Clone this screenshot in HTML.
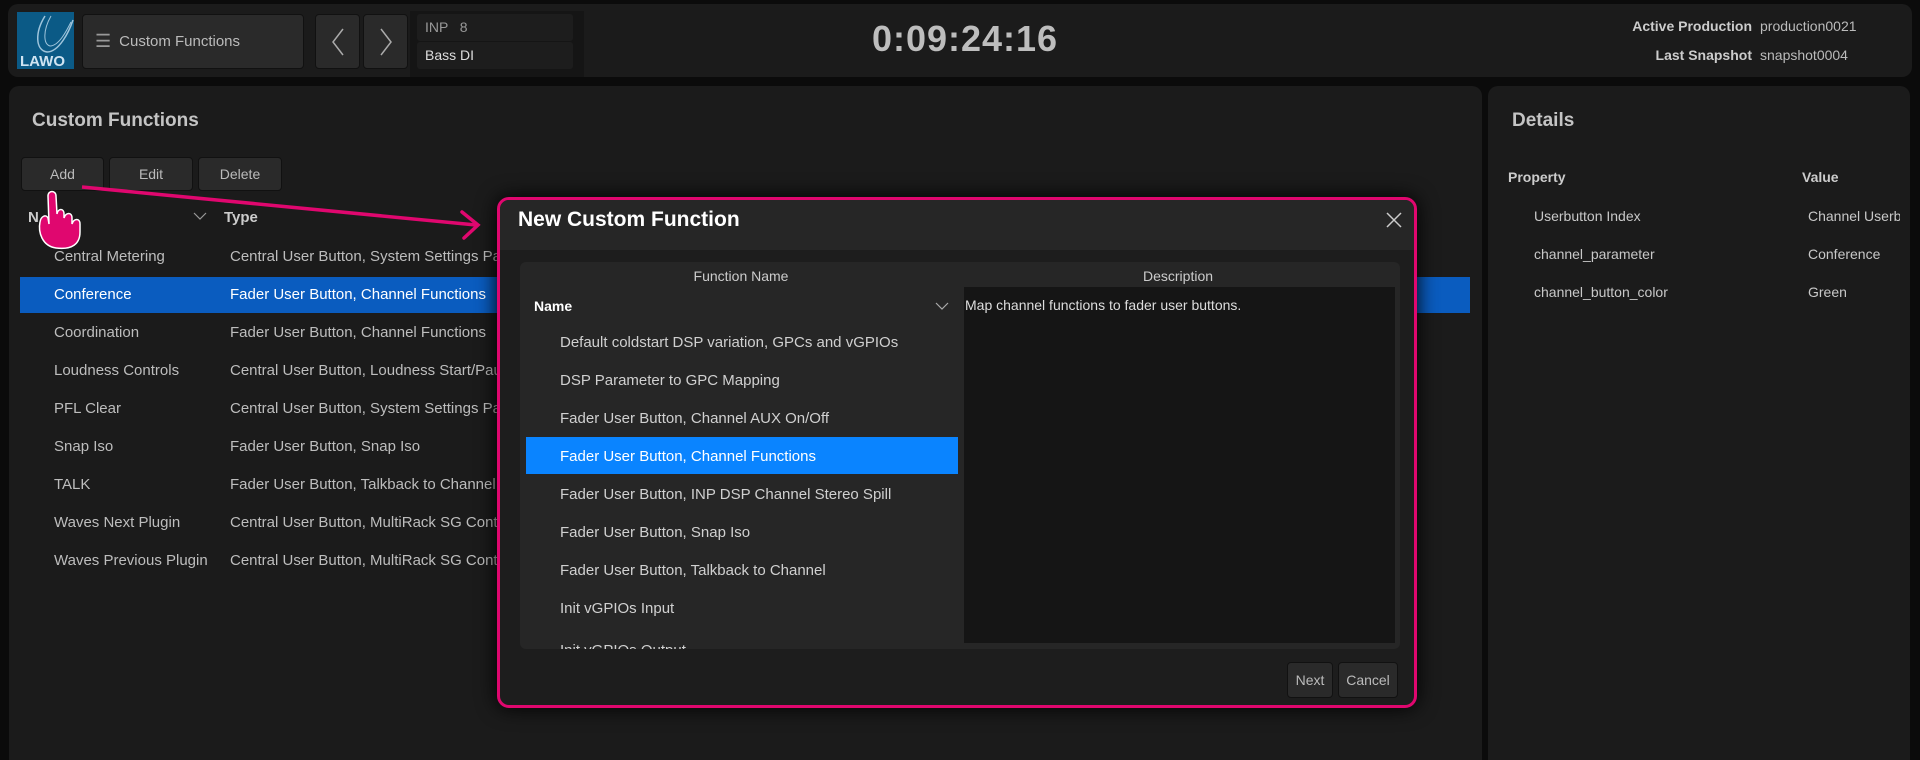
<!DOCTYPE html>
<html><head><meta charset="utf-8"><style>
*{box-sizing:border-box;margin:0;padding:0}
html,body{width:1920px;height:760px;overflow:hidden}
body{background:#0b0b0b;font-family:"Liberation Sans",sans-serif;color:#c8c8c8;position:relative;font-size:15px}
.a{position:absolute}
.panel{background:#1b1b1b;border-radius:10px}
.btn{background:#2a2a2a;border:1px solid #111;border-radius:4px;color:#bbb;display:flex;align-items:center;justify-content:center}
.row{position:absolute;left:54px;font-size:15px;color:#bdbdbd}
.t{position:absolute;left:230px;font-size:15px;color:#bdbdbd;white-space:nowrap}
.li{position:absolute;left:560px;font-size:15px;color:#d0d0d0;white-space:nowrap}
</style></head><body>
<div class="a panel" style="left:8px;top:4px;width:1904px;height:73px"></div>
<div class="a" style="left:17px;top:12px;width:57px;height:57px;background:#0b5a86"></div>
<svg class="a" style="left:17px;top:12px" width="57" height="57"><path d="M28 4 C18 20 18 38 30 40 C42 40 52 20 56 8" fill="none" stroke="#9fc5dc" stroke-width="1.5"/><path d="M34 4 C26 18 26 32 33 34 C42 34 50 18 54 10" fill="none" stroke="#9fc5dc" stroke-width="1"/><text x="3" y="54" fill="#cfe4f2" font-size="15" font-weight="bold" font-family="Liberation Sans">LAWO</text></svg>
<div class="a btn" style="left:82px;top:14px;width:222px;height:55px;justify-content:flex-start;padding-left:12px;font-size:15px">
<span style="font-size:18px;margin-right:8px;color:#999">☰</span>Custom Functions</div>
<div class="a btn" style="left:315px;top:14px;width:45px;height:55px"><svg width="16" height="30"><path d="M13 2 L3 15 L13 28" fill="none" stroke="#aaa" stroke-width="1.5"/></svg></div>
<div class="a btn" style="left:363px;top:14px;width:45px;height:55px"><svg width="16" height="30"><path d="M3 2 L13 15 L3 28" fill="none" stroke="#aaa" stroke-width="1.5"/></svg></div>
<div class="a" style="left:410px;top:11px;width:174px;height:66px;background:#151515"></div>
<div class="a" style="left:417px;top:14px;width:156px;height:27px;background:#1d1d1d;border-radius:3px;padding:5px 8px;color:#999;font-size:14px">INP &nbsp;&nbsp;8</div>
<div class="a" style="left:417px;top:42px;width:156px;height:27px;background:#1d1d1d;border-radius:3px;padding:5px 8px;color:#ddd;font-size:14px">Bass DI</div>
<div class="a" style="left:780px;top:18px;width:370px;text-align:center;font-size:36px;font-weight:bold;color:#bdbdbd;letter-spacing:1px">0:09:24:16</div>
<div class="a" style="left:1560px;top:18px;width:192px;text-align:right;font-weight:bold;font-size:14px;color:#ccc">Active Production</div>
<div class="a" style="left:1760px;top:18px;font-size:14px;color:#bbb">production0021</div>
<div class="a" style="left:1560px;top:47px;width:192px;text-align:right;font-weight:bold;font-size:14px;color:#ccc">Last Snapshot</div>
<div class="a" style="left:1760px;top:47px;font-size:14px;color:#bbb">snapshot0004</div>

<div class="a panel" style="left:9px;top:86px;width:1473px;height:690px"></div>
<div class="a" style="left:32px;top:110px;font-size:19px;font-weight:bold;color:#c4c4c4">Custom Functions</div>
<div class="a btn" style="left:21px;top:157px;width:83px;height:34px;font-size:14px">Add</div>
<div class="a btn" style="left:109px;top:157px;width:84px;height:34px;font-size:14px">Edit</div>
<div class="a btn" style="left:198px;top:157px;width:84px;height:34px;font-size:14px">Delete</div>
<div class="a" style="left:28px;top:209px;font-weight:bold;color:#ccc">N</div>
<svg class="a" style="left:193px;top:212px" width="14" height="9"><path d="M1 1 L7 7 L13 1" fill="none" stroke="#999" stroke-width="1.2"/></svg>
<div class="a" style="left:224px;top:209px;font-weight:bold;color:#ccc">Type</div>
<div class="a" style="left:20px;top:277px;width:1450px;height:36px;background:#0a5cbf"></div>
<div class="row" style="top:248px">Central Metering</div><div class="t" style="top:248px">Central User Button, System Settings Pag</div>
<div class="row" style="top:286px;color:#fff">Conference</div><div class="t" style="top:286px;color:#fff">Fader User Button, Channel Functions</div>
<div class="row" style="top:324px">Coordination</div><div class="t" style="top:324px">Fader User Button, Channel Functions</div>
<div class="row" style="top:362px">Loudness Controls</div><div class="t" style="top:362px">Central User Button, Loudness Start/Pau</div>
<div class="row" style="top:400px">PFL Clear</div><div class="t" style="top:400px">Central User Button, System Settings Pag</div>
<div class="row" style="top:438px">Snap Iso</div><div class="t" style="top:438px">Fader User Button, Snap Iso</div>
<div class="row" style="top:476px">TALK</div><div class="t" style="top:476px">Fader User Button, Talkback to Channel</div>
<div class="row" style="top:514px">Waves Next Plugin</div><div class="t" style="top:514px">Central User Button, MultiRack SG Contro</div>
<div class="row" style="top:552px">Waves Previous Plugin</div><div class="t" style="top:552px">Central User Button, MultiRack SG Contro</div>

<div class="a panel" style="left:1488px;top:86px;width:422px;height:690px"></div>
<div class="a" style="left:1512px;top:110px;font-size:19px;font-weight:bold;color:#c4c4c4">Details</div>
<div class="a" style="left:1508px;top:169px;font-weight:bold;font-size:14px;color:#ccc">Property</div>
<div class="a" style="left:1802px;top:169px;font-weight:bold;font-size:14px;color:#ccc">Value</div>
<div class="a" style="left:1534px;top:208px;font-size:14px">Userbutton Index</div><div class="a" style="left:1808px;top:208px;font-size:14px;width:92px;overflow:hidden;white-space:nowrap">Channel Userbutton</div>
<div class="a" style="left:1534px;top:246px;font-size:14px">channel_parameter</div><div class="a" style="left:1808px;top:246px;font-size:14px">Conference</div>
<div class="a" style="left:1534px;top:284px;font-size:14px">channel_button_color</div><div class="a" style="left:1808px;top:284px;font-size:14px">Green</div>

<!-- dialog -->
<div class="a" style="left:497px;top:197px;width:920px;height:511px;border:3px solid #e0076f;border-radius:12px;background:#1d1d1d;overflow:hidden;box-shadow:0 0 20px #000">
<div style="height:50px;background:#262626"></div></div>
<div class="a" style="left:518px;top:208px;font-size:21px;font-weight:bold;color:#fff">New Custom Function</div>
<svg class="a" style="left:1385px;top:211px" width="18" height="18"><path d="M2 2 L16 16 M16 2 L2 16" stroke="#ccc" stroke-width="1.5"/></svg>
<div class="a" style="left:520px;top:262px;width:880px;height:387px;background:#262626;border-radius:6px;overflow:hidden">
<div class="a" style="left:6px;top:175px;width:432px;height:37px;background:#0a84ff"></div>
<div class="a" style="left:444px;top:25px;width:431px;height:356px;background:#151515"></div>
<div class="a" style="left:40px;top:380px;font-size:15px;color:#d0d0d0;white-space:nowrap">Init vGPIOs Output</div>
</div>
<div class="a" style="left:560px;top:268px;width:362px;text-align:center;font-size:14px;color:#ccc">Function Name</div>
<div class="a" style="left:1090px;top:268px;width:176px;text-align:center;font-size:14px;color:#ccc">Description</div>
<div class="a" style="left:534px;top:298px;font-weight:bold;font-size:14px;color:#fff">Name</div>
<svg class="a" style="left:935px;top:302px" width="14" height="9"><path d="M1 1 L7 7 L13 1" fill="none" stroke="#aaa" stroke-width="1.2"/></svg>
<div class="a" style="left:965px;top:297px;font-size:14px;color:#ddd">Map channel functions to fader user buttons.</div>
<div class="li" style="top:334px">Default coldstart DSP variation, GPCs and vGPIOs</div>
<div class="li" style="top:372px">DSP Parameter to GPC Mapping</div>
<div class="li" style="top:410px">Fader User Button, Channel AUX On/Off</div>
<div class="li" style="top:448px;color:#fff">Fader User Button, Channel Functions</div>
<div class="li" style="top:486px">Fader User Button, INP DSP Channel Stereo Spill</div>
<div class="li" style="top:524px">Fader User Button, Snap Iso</div>
<div class="li" style="top:562px">Fader User Button, Talkback to Channel</div>
<div class="li" style="top:600px">Init vGPIOs Input</div>
<div class="a btn" style="left:1287px;top:662px;width:46px;height:36px;font-size:14px">Next</div>
<div class="a btn" style="left:1338px;top:662px;width:60px;height:36px;font-size:14px">Cancel</div>

<svg class="a" style="left:0;top:0" width="1920" height="760">
<path d="M82 187 L476 225" stroke="#e0076f" stroke-width="3.5" fill="none"/>
<path d="M462 212 L478 225 L464 238" stroke="#e0076f" stroke-width="3.5" fill="none" stroke-linecap="round"/>
<path d="M56 248 C42 246 38 232 40 222 C41 216 46 214 48 218 L49 224 L48 196 C48 190 56 190 56 196 L57 214 C58 208 64 208 64 214 L64 218 C66 212 72 212 72 218 L72 224 C74 218 80 218 80 224 L80 232 C80 244 72 250 56 248 Z" fill="#e0076f" stroke="#fff" stroke-width="1.5"/>
</svg>
</body></html>
